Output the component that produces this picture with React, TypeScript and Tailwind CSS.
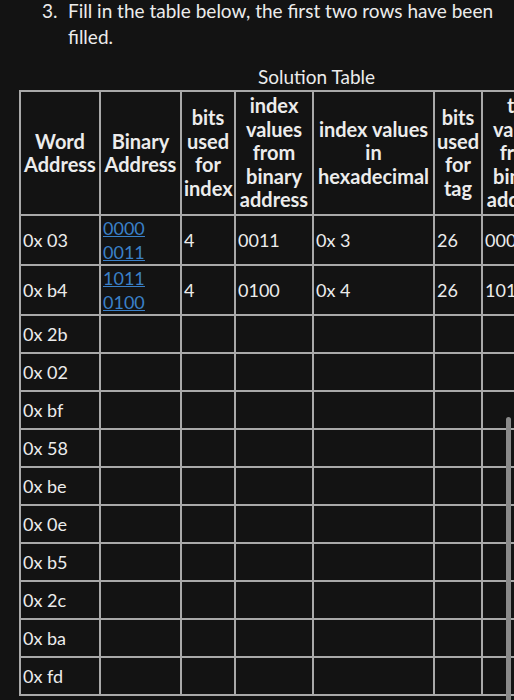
import React from "react";

const rows = [
  { word: "0x 03", bin: ["0000", "0011"], bits: "4", idx: "0011", hex: "0x 3", tagBits: "26", tag: "000000000000" },
  { word: "0x b4", bin: ["1011", "0100"], bits: "4", idx: "0100", hex: "0x 4", tagBits: "26", tag: "101101000000" },
  { word: "0x 2b" },
  { word: "0x 02" },
  { word: "0x bf" },
  { word: "0x 58" },
  { word: "0x be" },
  { word: "0x 0e" },
  { word: "0x b5" },
  { word: "0x 2c" },
  { word: "0x ba" },
  { word: "0x fd" },
];

const headers = [
  { label: "Word Address", w: "w-[80px]" },
  { label: "Binary Address", w: "w-[81px]" },
  { label: "bits used for index", w: "w-[54px]" },
  { label: "index values from binary address", w: "w-[78px]" },
  { label: "index values in hexadecimal", w: "w-[121px]" },
  { label: "bits used for tag", w: "w-[48px]" },
  { label: "tag values from binary address", w: "w-[78px]" },
  { label: "bits for offset", w: "w-[53px]" },
];

const cell = "border-2 border-[#a9a9a9] px-[2px] align-middle";

export default function App() {
  return (
    <div
      className="relative w-[514px] h-[700px] overflow-hidden bg-[#131313] text-[#ececec]"
      style={{ fontFamily: "Lato, 'Noto Sans', sans-serif" }}
    >
      <div className="flex pl-[42px] pr-4 -mt-[2px] text-[19px] leading-[26px]">
        <span className="w-[26px] shrink-0">3.</span>
        <p>Fill in the table below, the first two rows have been filled.</p>
      </div>

      <table className="ml-[19px] mt-[14px] border-collapse table-fixed w-[593px] text-[18px]">
        <caption className="leading-[26px] text-[19px]">Solution Table</caption>
        <thead>
          <tr className="h-[124px]">
            {headers.map((h) => (
              <th key={h.label} className={`${cell} ${h.w} font-bold text-[20px] leading-[23.5px] text-center`}>
                {h.label}
              </th>
            ))}
          </tr>
        </thead>
        <tbody>
          {rows.map((r) => (
            <tr key={r.word} className={r.bin ? "h-[50px]" : "h-[38px]"}>
              <td className={`${cell} leading-[24px]`}>{r.word}</td>
              <td className={`${cell} leading-[24px]`}>
                {r.bin && (
                  <div className="flex flex-col text-[#3a80c8] underline">
                    <a href="#">{r.bin[0]}</a>
                    <a href="#">{r.bin[1]}</a>
                  </div>
                )}
              </td>
              <td className={`${cell} leading-[24px]`}>{r.bits}</td>
              <td className={`${cell} leading-[24px]`}>{r.idx}</td>
              <td className={`${cell} leading-[24px]`}>{r.hex}</td>
              <td className={`${cell} leading-[24px]`}>{r.tagBits}</td>
              <td className={`${cell} leading-[24px] whitespace-nowrap overflow-hidden`}>{r.tag}</td>
              <td className={`${cell} leading-[24px]`}></td>
            </tr>
          ))}
        </tbody>
      </table>

      <div className="absolute left-[506px] top-[417px] w-[5px] h-[300px] rounded-full bg-[#8a8a8a]" />
    </div>
  );
}
